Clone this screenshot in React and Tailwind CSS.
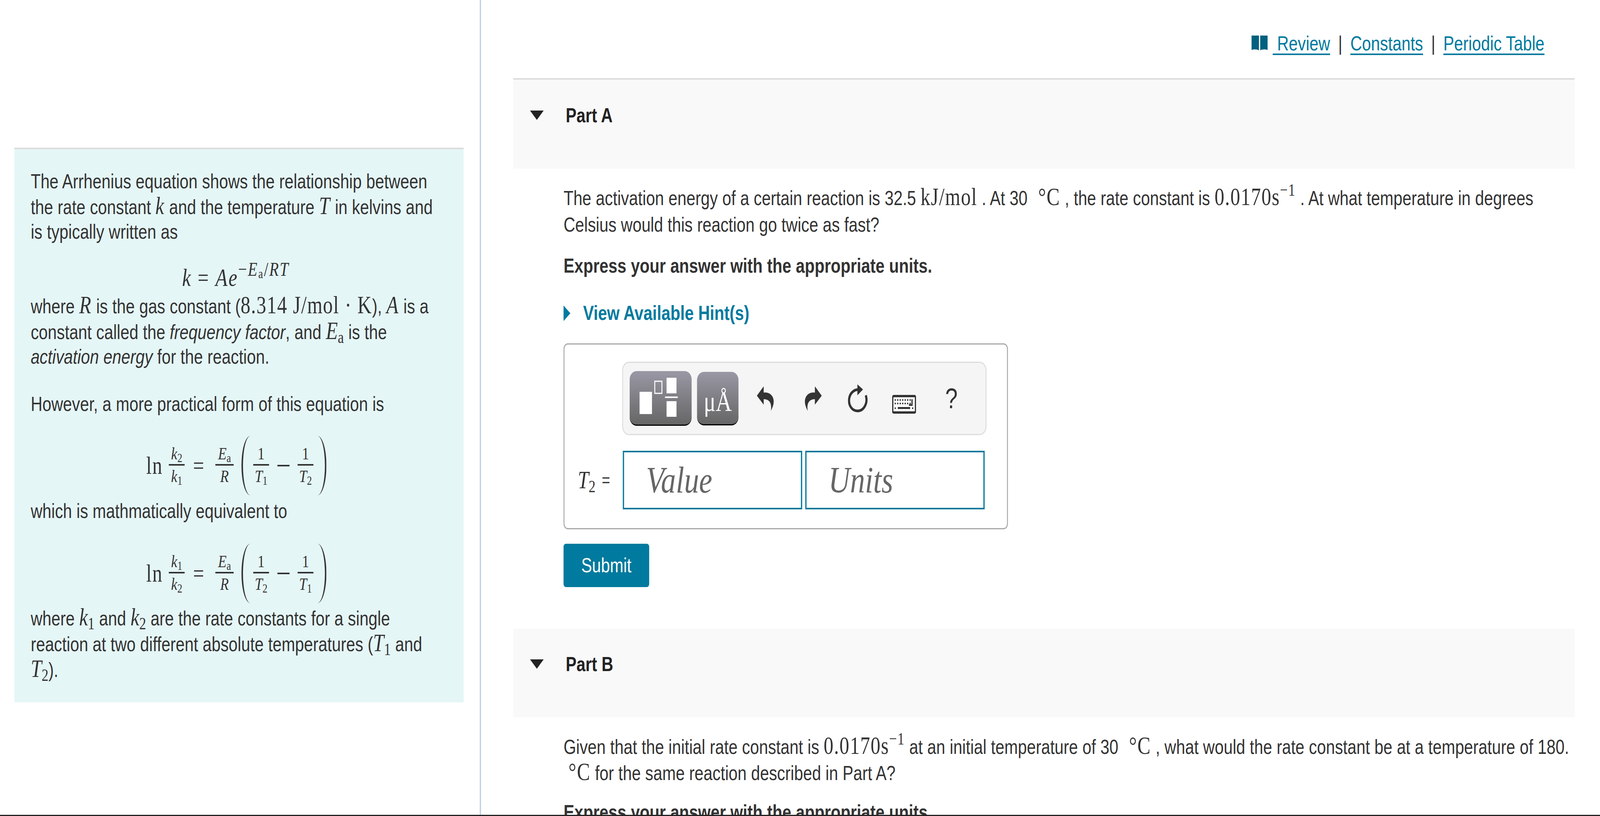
const MathText = ({ children, className = "" }) => (
  <span className={`font-['Liberation_Serif'] text-[63px] leading-none tracking-[0.03em] ${className}`}>{children}</span>
);

const Var = ({ children }) => <MathText className="italic">{children}</MathText>;

function Sub({ name, n }) {
  return (
    <span className="font-['Liberation_Serif'] text-[63px] leading-none">
      <i>{name}</i>
      <span className="relative top-[10px] text-[44px] leading-none">{n}</span>
    </span>
  );
}

function Frac({ top, bottom, w = "w-[51px]" }) {
  return (
    <span className={`${w} flex flex-col items-center font-['Liberation_Serif'] text-[45px] leading-[50px]`}>
      <span className="h-[56px] border-b-4 border-[#333] w-full text-center whitespace-nowrap">{top}</span>
      <span className="h-[56px] pt-[2px] whitespace-nowrap">{bottom}</span>
    </span>
  );
}

const Small = ({ name, n }) => (
  <>
    <i>{name}</i>
    <span className="relative top-[7px] text-[32px] leading-none">{n}</span>
  </>
);

function Equation({ a, b, c, d }) {
  return (
    <div className="flex items-center h-[152px] ml-[372px] font-['Liberation_Serif'] text-[#333]">
      <span className="text-[63px] leading-none w-[73px] tracking-[0.04em]">ln</span>
      <Frac top={<Small name="k" n={a} />} bottom={<Small name="k" n={b} />} />
      <span className="text-[63px] leading-none ml-[27px] w-[72px]">=</span>
      <Frac w="w-[59px]" top={<Small name="E" n="a" />} bottom={<i>R</i>} />
      <span className="ml-[25px] -mr-[28px] w-[58px] h-[152px] rounded-[50%] border-l-[5px] border-[#333]" />
      <span className="ml-[8px]">
        <Frac top="1" bottom={<Small name="T" n={c} />} />
      </span>
      <span className="ml-[27px] w-[39px] h-[4px] bg-[#333]" />
      <span className="ml-[26px]">
        <Frac top="1" bottom={<Small name="T" n={d} />} />
      </span>
      <span className="-ml-[16px] w-[58px] h-[152px] rounded-[50%] border-r-[5px] border-[#333]" />
    </div>
  );
}

function Book() {
  return (
    <svg viewBox="0 0 52 40" className="w-[52px] h-[40px]">
      <path d="M0 0H24V38C18 35 8 35 0 37Z" fill="#00607f" />
      <path d="M28 0H52V37C44 35 34 35 28 38Z" fill="#00607f" />
    </svg>
  );
}

function Undo({ className = "" }) {
  return (
    <svg viewBox="0 0 55 63" className={`w-[55px] h-[63px] ${className}`}>
      <path d="M0 24L22 0V16C45 14 56 28 54 42C53.5 50 48 58 45 63C48 50 46 33 22 33V47Z" fill="#333" />
    </svg>
  );
}

function Reset() {
  return (
    <svg viewBox="0 0 65 72" className="w-[65px] h-[72px]">
      <path d="M58 28C66 50 50 68 32 68C14 68 4 55 4 42C4 26 16 14 34 13" fill="none" stroke="#333" strokeWidth="7" />
      <path d="M31 0L49 13L31 28Z" fill="#333" />
    </svg>
  );
}

function Keyboard() {
  const top = [12, 20, 28, 36, 44, 52, 60];
  return (
    <svg viewBox="0 0 77 48" className="w-[77px] h-[48px]">
      <rect width="77" height="48" rx="5" fill="#333" />
      <rect x="4" y="6" width="69" height="36" fill="#fff" />
      {top.map((x) => (
        <rect key={x} x={x - 4} y="11" width="4" height="4" fill="#333" />
      ))}
      {top.map((x) => (
        <rect key={x} x={x - 4} y="20" width="4" height="4" fill="#333" />
      ))}
      <path d="M62 11H66V28H54V24H62Z" fill="#333" />
      <rect x="8" y="32" width="4" height="4" fill="#333" />
      <rect x="18" y="31" width="40" height="5" fill="#333" />
      <rect x="64" y="32" width="4" height="4" fill="#333" />
    </svg>
  );
}

function TemplateIcon() {
  return (
    <svg viewBox="0 0 200 137" className="w-[200px] h-[137px]">
      <rect x="32" y="53" width="40" height="57" fill="#fff" />
      <rect x="81" y="26" width="23" height="31" fill="none" stroke="#fff" strokeWidth="3" />
      <rect x="119" y="17" width="32" height="40" fill="#fff" />
      <rect x="114" y="65" width="41" height="4" fill="#fff" />
      <rect x="119" y="77" width="32" height="40" fill="#fff" />
    </svg>
  );
}

const toolButton = "rounded-[22px] border-b-[3px] border-black bg-gradient-to-b from-[#9a98a5] to-[#666666]";
const linkLine = "underline decoration-[4px] underline-offset-[8px]";
const answerInput = "w-[578px] h-[150px] border-4 border-[#00779b] pl-[71px] flex items-center font-['Liberation_Serif'] italic text-[96px] leading-none text-[#666666]";

function PartHeader({ title, className = "" }) {
  return (
    <div className={`h-[228px] bg-[#f9f9f9] flex pl-[54px] pt-[60px] ${className}`}>
      <span className="mt-[19px] w-0 h-0 border-x-[22px] border-x-transparent border-t-[24px] border-t-[#222]" />
      <h2 className="ml-[71px] font-bold text-[#222]">{title}</h2>
    </div>
  );
}

export default function App() {
  // the page is 5156 wide; narrow it to the window when the window is smaller
  const fit = window.innerWidth / 5156;

  return (
    <div className="w-full h-[2089px] overflow-hidden">
      <div
        style={{ transform: `scaleX(${fit})` }}
        className="origin-top-left w-[5156px] h-[2089px] overflow-hidden flex bg-white border-b-[3px] border-[#222] font-['Liberation_Sans',sans-serif] text-[52px] leading-[63px] text-[#333]"
      >
        <aside className="w-[1550px] shrink-0 border-r-4 border-[#bccfe4] pt-[378px] pl-[46px]">
          <div className="w-[1448px] h-[1420px] bg-[#e5f6f6] border-t-4 border-[#dddddd] pl-[53px] pt-[51px] whitespace-nowrap">
            <p>
              The Arrhenius equation shows the relationship between
              <br />
              the rate constant <Var>k</Var> and the temperature <Var>T</Var> in kelvins and
              <br />
              is typically written as
            </p>
            <div className="mt-[53px] ml-[488px] h-[72px] font-['Liberation_Serif'] text-[63px] leading-[67px] tracking-[0.05em]">
              <i>k</i> = <i>Ae</i>
              <span className="relative -top-[26px] text-[50px] leading-none">
                −<i>E</i>
                <span className="relative top-[6px] text-[34px]">a</span>/<i>RT</i>
              </span>
            </div>
            <p>
              where <Var>R</Var> is the gas constant (<MathText>8.314 J/mol · K</MathText>), <Var>A</Var> is a
              <br />
              constant called the <em>frequency factor</em>, and <Sub name="E" n="a" /> is the
              <br />
              <em>activation energy</em> for the reaction.
            </p>
            <p className="mt-[58px]">However, a more practical form of this equation is</p>
            <div className="mt-[50px]">
              <Equation a="2" b="1" c="1" d="2" />
            </div>
            <p className="mt-[9px]">which is mathmatically equivalent to</p>
            <div className="mt-[52px]">
              <Equation a="1" b="2" c="2" d="1" />
            </div>
            <p className="pt-[5px]">
              where <Sub name="k" n="1" /> and <Sub name="k" n="2" /> are the rate constants for a single
              <br />
              reaction at two different absolute temperatures (<Sub name="T" n="1" /> and
              <br />
              <Sub name="T" n="2" />).
            </p>
          </div>
        </aside>

        <main className="flex-1 pl-[104px] pr-[82px] whitespace-nowrap">
          <nav className="h-[200px] pt-[80px] pr-[97px] flex justify-end items-start text-[#007a9e]">
            <span className="mt-[11px]">
              <Book />
            </span>
            <a className={`ml-[16px] ${linkLine}`}>&nbsp;Review</a>
            <span className="mx-[26px] text-[#333]">|</span>
            <a className={linkLine}>Constants</a>
            <span className="mx-[26px] text-[#333]">|</span>
            <a className={linkLine}>Periodic Table</a>
          </nav>

          <section className="border-t-4 border-[#dddddd]">
            <PartHeader title="Part A" />
            <div className="pl-[162px]">
              <p className="pt-[41px] leading-[68px]">
                The activation energy of a certain reaction is 32.5 <MathText>kJ/mol</MathText> . At 30 <MathText className="ml-[20px]">°C</MathText> , the rate constant is <MathText>0.0170s<span className="relative -top-[24px] text-[44px]">−1</span></MathText> . At what temperature in degrees
                <br />
                Celsius would this reaction go twice as fast?
              </p>
              <p className="mt-[40px] font-bold">Express your answer with the appropriate units.</p>
              <button className="mt-[58px] flex items-center font-bold text-[#007a9e]">
                <span className="w-0 h-0 border-y-[20px] border-y-transparent border-l-[22px] border-l-[#007a9e] mr-[41px]" />
                View Available Hint(s)
              </button>

              <div className="mt-[46px] w-[1432px] h-[476px] rounded-[14px] border-[3px] border-[#a8a8a8] pl-[186px] pt-[44px]">
                <div className="w-[1174px] h-[188px] rounded-[22px] border-[3px] border-[#dddddd] bg-[#f5f5f5] flex items-center pl-[21px]">
                  <span className={toolButton}>
                    <TemplateIcon />
                  </span>
                  <span className={`${toolButton} ml-[17px] w-[134px] h-[137px] flex items-end justify-center pb-[22px] font-['Liberation_Serif'] text-[72px] leading-none text-white`}>
                    μÅ
                  </span>
                  <span className="ml-[59px]">
                    <Undo />
                  </span>
                  <span className="ml-[99px]">
                    <Undo className="-scale-x-100" />
                  </span>
                  <span className="ml-[84px]">
                    <Reset />
                  </span>
                  <span className="ml-[78px] mt-[30px]">
                    <Keyboard />
                  </span>
                  <span className="ml-[94px] text-[72px] leading-none">?</span>
                </div>
                <div className="mt-[40px] flex -ml-[143px] items-center">
                  <span className="w-[145px] flex items-center">
                    <Sub name="T" n="2" />
                    <span className="ml-[20px] text-[46px]">=</span>
                  </span>
                  <div className={answerInput}>Value</div>
                  <div className={`ml-[10px] ${answerInput}`}>Units</div>
                </div>
              </div>

              <button className="mt-[37px] block w-[276px] h-[111px] rounded-[8px] bg-[#007a9e] text-white font-medium">Submit</button>
            </div>
          </section>

          <section className="mt-[106px]">
            <PartHeader title="Part B" />
            <div className="pl-[162px]">
              <p className="pt-[41px] leading-[66px]">
                Given that the initial rate constant is <MathText>0.0170s<span className="relative -top-[24px] text-[44px]">−1</span></MathText> at an initial temperature of 30 <MathText className="ml-[20px]">°C</MathText> , what would the rate constant be at a temperature of 180.
                <br />
                <MathText className="ml-[16px]">°C</MathText> for the same reaction described in Part A?
              </p>
              <p className="mt-[36px] font-bold">Express your answer with the appropriate units.</p>
            </div>
          </section>
        </main>
      </div>
    </div>
  );
}
